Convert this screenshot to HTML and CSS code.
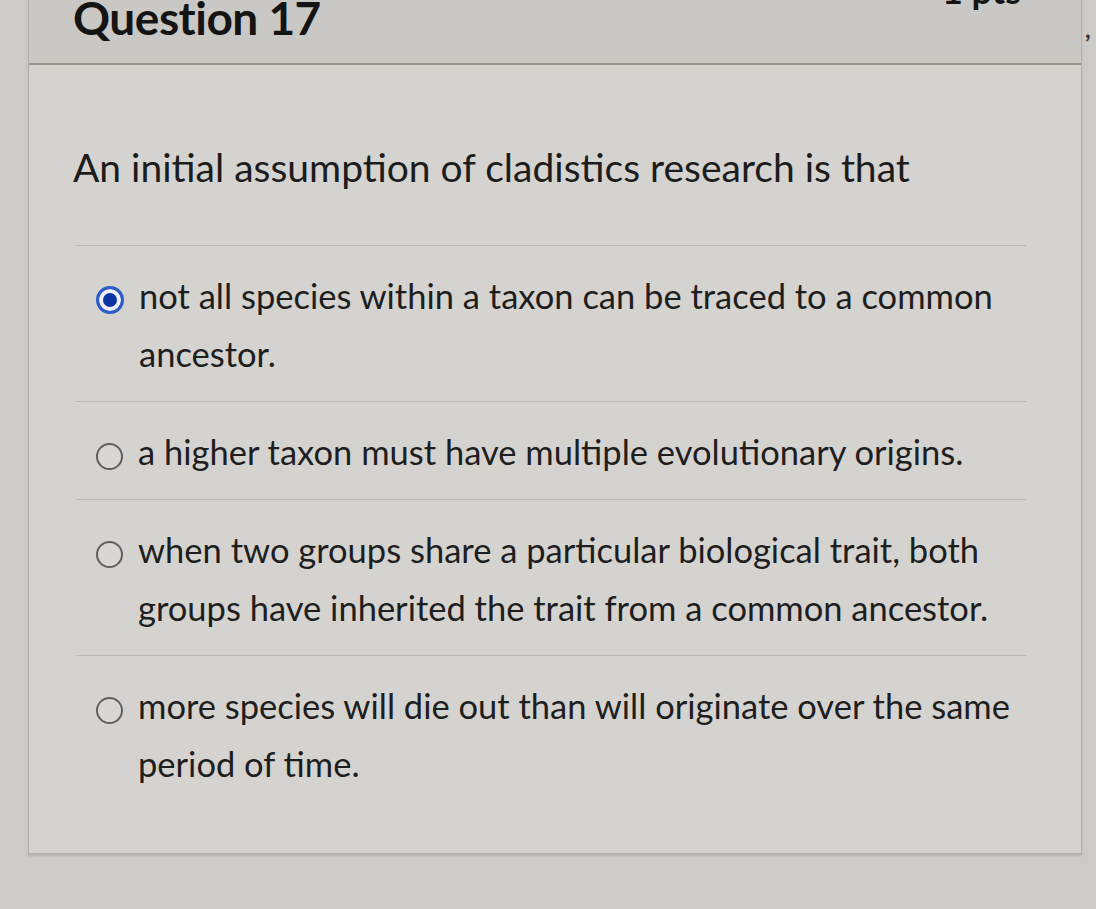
FILE: index.html
```html
<!DOCTYPE html>
<html>
<head>
<meta charset="utf-8">
<link rel="stylesheet" href="styles.css">
</head>
<body>
<div class="page">
  <div class="card">
    <div class="card-header">
      <h2 class="title">Question 17</h2>
      <span class="pts">1 pts</span>
    </div>
    <div class="card-body">
      <p class="question">An initial assumption of cladistics research is that</p>
      <div class="answers">
        <div class="answer">
          <span class="radio checked"></span>
          <span class="answer-text">not all species within a taxon can be traced to a common ancestor.</span>
        </div>
        <div class="answer">
          <span class="radio"></span>
          <span class="answer-text">a higher taxon must have multiple evolutionary origins.</span>
        </div>
        <div class="answer">
          <span class="radio"></span>
          <span class="answer-text">when two groups share a particular biological trait, both groups have inherited the trait from a common ancestor.</span>
        </div>
        <div class="answer">
          <span class="radio"></span>
          <span class="answer-text">more species will die out than will originate over the same period of time.</span>
        </div>
      </div>
    </div>
  </div>
  <span class="mark">,</span>
</div>
</body>
</html>
```
FILE: styles.css
```css
html, body {
  margin: 0;
  padding: 0;
}
body {
  background: #cdcbc8;
  font-family: Lato, "Open Sans", sans-serif;
  color: #1e1e1e;
  width: 1096px;
  height: 909px;
  overflow: hidden;
}
.page {
  display: flex;
  align-items: flex-start;
  padding-left: 28px;
}
.card {
  width: 1052px;
  margin-top: -7px;
  background: #d5d3d0;
  border: 1px solid #b3b1ae;
  border-top: none;
  box-shadow: 0 2px 2px rgba(0,0,0,0.12);
}
.card-header {
  display: flex;
  justify-content: space-between;
  align-items: flex-start;
  background: #cac8c5;
  border-bottom: 2px solid #97958f;
  height: 70px;
  padding: 0 60px 0 44px;
}
.title {
  margin: 0;
  font-size: 46px;
  font-weight: 700;
  line-height: 50px;
  color: #141414;
  letter-spacing: -0.5px;
}
.pts {
  font-size: 36px;
  font-weight: 700;
  line-height: 40px;
  margin-top: -23px;
  color: #141414;
}
.card-body {
  padding: 79px 55px 42px 44px;
}
.question {
  margin: 0 0 55px 0;
  font-size: 39px;
  line-height: 46px;
  color: #1c1c1c;
}
.answers {
  display: flex;
  flex-direction: column;
  margin-left: 3px;
}
.answer {
  display: flex;
  align-items: flex-start;
  gap: 15px;
  border-top: 1px solid #bab8b5;
  padding: 21px 0 18px 20px;
}
.answer-text {
  font-size: 34.5px;
  line-height: 58px;
  color: #1e1e1e;
}
.radio {
  flex: none;
  box-sizing: border-box;
  width: 27px;
  height: 27px;
  border: 2px solid #5f5f5f;
  border-radius: 50%;
  margin-top: 20px;
  background: #d9d7d4;
}
.radio.checked {
  width: 28px;
  height: 28px;
  margin-top: 19px;
  border: 3px solid #2d5bc8;
  background: #0c34a3;
  box-shadow: inset 0 0 0 4px #eef0f6;
}
.mark {
  font-size: 24px;
  font-weight: 700;
  color: #333;
  margin-left: 3px;
  margin-top: 14px;
}
```
